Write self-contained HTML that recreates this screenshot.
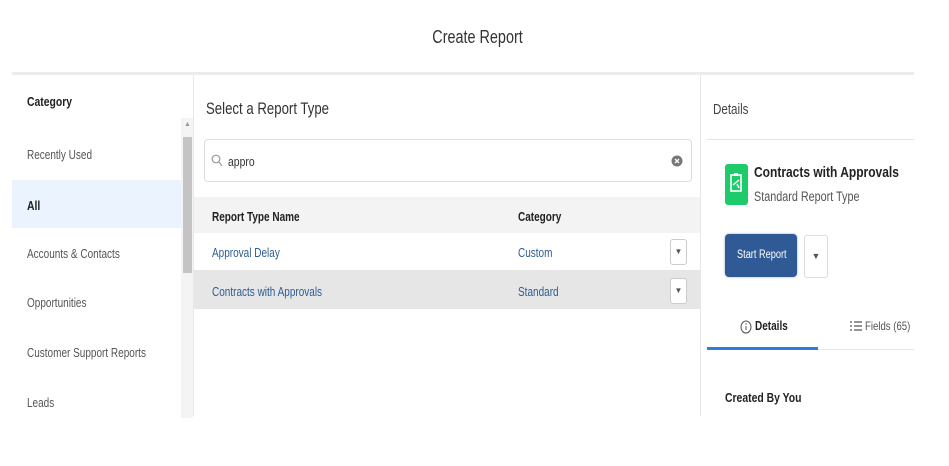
<!DOCTYPE html><html><head><style>
body{margin:0;width:949px;height:466px;background:#fff;font-family:"Liberation Sans",sans-serif;position:relative;overflow:hidden;color:#222}
.a{position:absolute;white-space:nowrap}
.c{display:inline-block;transform:scaleX(.8);transform-origin:left center}
.b{font-weight:bold}
.lk{color:#2d5c92}
.dd{position:absolute;width:15px;height:24px;border:1px solid #ccc;border-radius:3px;background:#fff;font-size:8px;color:#555;text-align:center;line-height:24px}
</style></head><body>
<div class="a" style="left:0;width:956px;top:27px;text-align:center;font-size:18px;color:#333"><span class="c" style="transform-origin:center">Create Report</span></div>
<div class="a" style="left:12px;top:72px;width:902px;height:3px;background:#ececec"></div>
<div class="a" style="left:12px;top:180px;width:169px;height:48px;background:#ebf4fe"></div>
<div class="a" style="left:181px;top:118px;width:12px;height:300px;background:#f4f4f4"></div>
<div class="a" style="left:183px;top:137px;width:9px;height:136px;background:#c4c4c4"></div>
<div class="a" style="left:184px;top:121px;font-size:7px;color:#999">▲</div>
<div class="a" style="left:193px;top:75px;width:1px;height:341px;background:#e8e8e8"></div>
<div class="a b" style="left:27px;top:94px;font-size:13px"><span class="c">Category</span></div>
<div class="a" style="left:27px;top:148px;font-size:12.5px;color:#555"><span class="c">Recently Used</span></div>
<div class="a b" style="left:27px;top:198px;font-size:13px"><span class="c">All</span></div>
<div class="a" style="left:27px;top:247px;font-size:12.5px;color:#555"><span class="c">Accounts &amp; Contacts</span></div>
<div class="a" style="left:27px;top:296px;font-size:12.5px;color:#555"><span class="c">Opportunities</span></div>
<div class="a" style="left:27px;top:346px;font-size:12.5px;color:#555"><span class="c">Customer Support Reports</span></div>
<div class="a" style="left:27px;top:396px;font-size:12.5px;color:#555"><span class="c">Leads</span></div>
<div class="a" style="left:206px;top:100px;font-size:16.5px;color:#333"><span class="c">Select a Report Type</span></div>
<div class="a" style="left:204px;top:139px;width:486px;height:41px;border:1px solid #ddd;border-radius:4px"></div>
<svg class="a" style="left:211px;top:154px" width="12" height="13"><circle cx="5" cy="5" r="3.8" fill="none" stroke="#999" stroke-width="1.2"/><line x1="8" y1="8" x2="11" y2="12" stroke="#999" stroke-width="1.2"/></svg>
<div class="a" style="left:228px;top:154px;font-size:13px;color:#333"><span class="c">appro</span></div>
<svg class="a" style="left:671px;top:155px" width="12" height="12"><circle cx="6" cy="6" r="5.5" fill="#777"/><path d="M4 4L8 8M8 4L4 8" stroke="#fff" stroke-width="1.3"/></svg>
<div class="a" style="left:194px;top:197px;width:506px;height:36px;background:#f3f3f3"></div>
<div class="a b" style="left:212px;top:210px;font-size:12.5px"><span class="c">Report Type Name</span></div>
<div class="a b" style="left:518px;top:210px;font-size:12.5px"><span class="c">Category</span></div>
<div class="a" style="left:194px;top:270px;width:506px;height:39px;background:#e6e6e6"></div>
<div class="a lk" style="left:212px;top:246px;font-size:12.5px"><span class="c">Approval Delay</span></div>
<div class="a lk" style="left:518px;top:246px;font-size:12.5px"><span class="c">Custom</span></div>
<div class="a lk" style="left:212px;top:285px;font-size:12.5px"><span class="c">Contracts with Approvals</span></div>
<div class="a lk" style="left:518px;top:285px;font-size:12.5px"><span class="c">Standard</span></div>
<div class="dd" style="left:670px;top:239px">▼</div>
<div class="dd" style="left:670px;top:278px">▼</div>
<div class="a" style="left:700px;top:75px;width:1px;height:341px;background:#e8e8e8"></div>
<div class="a" style="left:713px;top:102px;font-size:14.5px;color:#444"><span class="c">Details</span></div>
<div class="a" style="left:707px;top:139px;width:207px;height:1px;background:#e5e5e5"></div>
<div class="a" style="left:725px;top:164px;width:23px;height:41px;background:#1ecb6b;border-radius:3px"></div>
<svg class="a" style="left:728px;top:172px" width="16" height="24"><rect x="3" y="3" width="10" height="16" fill="none" stroke="#fff" stroke-width="1.6"/><rect x="6" y="1" width="4" height="3" fill="#fff"/><path d="M5 13l6-5M9 12l2 4" stroke="#fff" stroke-width="1.4"/></svg>
<div class="a b" style="left:754px;top:164px;font-size:15px;color:#222"><span class="c">Contracts with Approvals</span></div>
<div class="a" style="left:754px;top:189px;font-size:13.5px;color:#555"><span class="c">Standard Report Type</span></div>
<div class="a" style="left:725px;top:234px;width:72px;height:43px;background:#2f5a96;border-radius:4px;box-shadow:0 0 2px #8ab"></div>
<div class="a" style="left:737px;top:249px;font-size:11.5px;color:#fff"><span class="c">Start Report</span></div>
<div class="a" style="left:804px;top:235px;width:22px;height:41px;border:1px solid #ddd;border-radius:3px;text-align:center;line-height:41px;font-size:9px;color:#555">▼</div>
<svg class="a" style="left:740px;top:320px" width="12" height="14"><ellipse cx="6" cy="7" rx="5" ry="6" fill="none" stroke="#555" stroke-width="1"/><line x1="6" y1="6" x2="6" y2="10" stroke="#555"/><circle cx="6" cy="4" r=".7" fill="#555"/></svg>
<div class="a b" style="left:755px;top:319px;font-size:12.5px"><span class="c">Details</span></div>
<svg class="a" style="left:850px;top:320px" width="12" height="12"><path d="M0 2h2M4 2h8M0 6h2M4 6h8M0 10h2M4 10h8" stroke="#555" stroke-width="1.2"/></svg>
<div class="a" style="left:865px;top:319px;font-size:12px;color:#555"><span class="c">Fields (65)</span></div>
<div class="a" style="left:707px;top:349px;width:207px;height:1px;background:#e5e5e5"></div>
<div class="a" style="left:707px;top:347px;width:111px;height:3px;background:#2d7ce6"></div>
<div class="a b" style="left:725px;top:390px;font-size:13px"><span class="c">Created By You</span></div>
</body></html>
